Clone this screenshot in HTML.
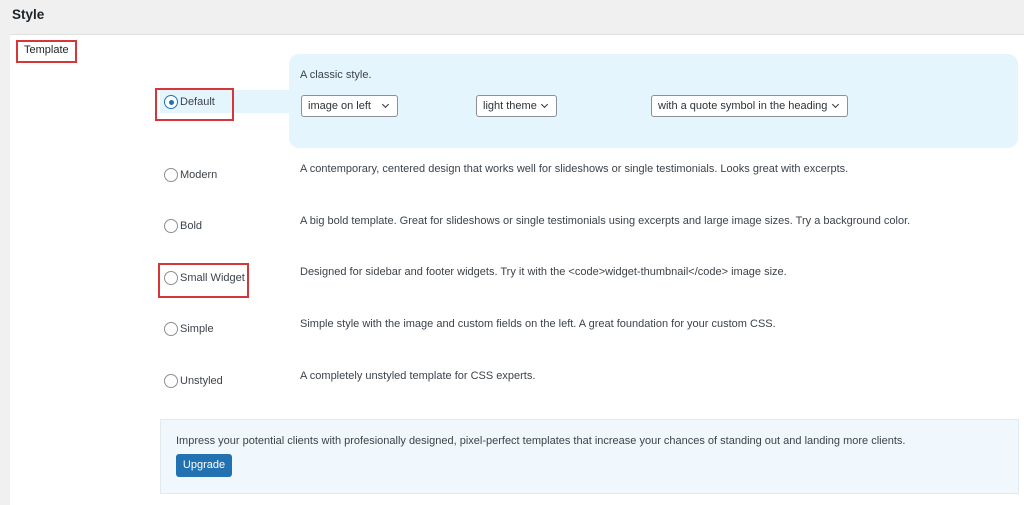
<!DOCTYPE html><html><head><style>
body{margin:0;width:1024px;height:499px;background:#f0f0f1;font-family:"Liberation Sans",sans-serif;font-size:11px;color:#3c434a;position:relative;overflow:hidden}
.a{position:absolute;white-space:nowrap}
.r{position:absolute;width:12px;height:12px;border:1.5px solid #8c8f94;border-radius:50%;background:#fff}
.red{position:absolute;border:2px solid #d63638}
.sel{position:absolute;height:22px;border:1px solid #8c8f94;border-radius:3px;background:#fff;line-height:20px;padding-left:6px;box-sizing:border-box;font-size:11px;color:#2c3338}
.sel:after{content:"";position:absolute;right:9px;top:6px;width:4px;height:4px;border-right:1.5px solid #2c3338;border-bottom:1.5px solid #2c3338;transform:rotate(45deg)}
</style></head><body>
<div class="a" style="left:12px;top:7px;font-size:13.5px;font-weight:bold;color:#1d2327">Style</div>
<div class="a" style="left:10px;top:34px;width:1014px;height:470px;background:#fff;border-top:1px solid #e0e0e0"></div>
<div class="a" style="left:24px;top:44px;color:#1d2327">Template</div>
<div class="red" style="left:16px;top:40px;width:57px;height:19px"></div>
<div class="a" style="left:289px;top:54px;width:729px;height:94px;background:#e5f5fe;border-radius:10px"></div>
<div class="a" style="left:160px;top:90px;width:130px;height:23px;background:#e5f5fe"></div>
<div class="a" style="left:300px;top:69px">A classic style.</div>
<div class="sel" style="left:301px;top:95px;width:97px">image on left</div>
<div class="sel" style="left:476px;top:95px;width:81px">light theme</div>
<div class="sel" style="left:651px;top:95px;width:197px">with a quote symbol in the heading</div>
<div class="r" style="left:164px;top:95px;border-color:#2271b1"></div><div class="a" style="left:169px;top:100px;width:5px;height:5px;border-radius:50%;background:#2271b1"></div>
<div class="a" style="left:180px;top:96px">Default</div>
<div class="red" style="left:155px;top:88px;width:75px;height:29px"></div>
<div class="r" style="left:164px;top:168px"></div><div class="a" style="left:180px;top:169px">Modern</div>
<div class="a" style="left:300px;top:163px">A contemporary, centered design that works well for slideshows or single testimonials. Looks great with excerpts.</div>
<div class="r" style="left:164px;top:219px"></div><div class="a" style="left:180px;top:220px">Bold</div>
<div class="a" style="left:300px;top:215px">A big bold template. Great for slideshows or single testimonials using excerpts and large image sizes. Try a background color.</div>
<div class="r" style="left:164px;top:271px"></div><div class="a" style="left:180px;top:272px">Small Widget</div>
<div class="red" style="left:158px;top:263px;width:87px;height:31px"></div>
<div class="a" style="left:300px;top:266px">Designed for sidebar and footer widgets. Try it with the &lt;code&gt;widget-thumbnail&lt;/code&gt; image size.</div>
<div class="r" style="left:164px;top:322px"></div><div class="a" style="left:180px;top:323px">Simple</div>
<div class="a" style="left:300px;top:318px">Simple style with the image and custom fields on the left. A great foundation for your custom CSS.</div>
<div class="r" style="left:164px;top:374px"></div><div class="a" style="left:180px;top:375px">Unstyled</div>
<div class="a" style="left:300px;top:370px">A completely unstyled template for CSS experts.</div>
<div class="a" style="left:160px;top:419px;width:857px;height:73px;background:#f0f8fd;border:1px solid #e2eaf0"></div>
<div class="a" style="left:176px;top:435px">Impress your potential clients with profesionally designed, pixel-perfect templates that increase your chances of standing out and landing more clients.</div>
<div class="a" style="left:176px;top:454px;width:56px;height:23px;background:#2271b1;border-radius:3px;color:#fff;font-size:11px;text-align:center;line-height:23px">Upgrade</div>
</body></html>
